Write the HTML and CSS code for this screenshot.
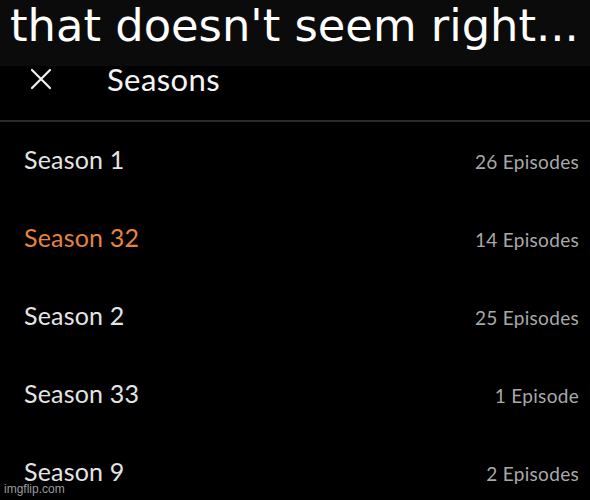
FILE: index.html
```html
<!DOCTYPE html>
<html lang="en">
<head>
    <meta charset="UTF-8">
    <title>Seasons</title>
    <link rel="stylesheet" href="styles.css">
</head>
<body>
    <div class="caption">that doesn't seem right...</div>

    <div class="panel">
        <div class="panel-head">
            <svg class="close" width="22" height="22" viewBox="0 0 22 22">
                <path d="M2 2 L20 20 M20 2 L2 20" stroke="#f2f2f2" stroke-width="2.2" stroke-linecap="round"/>
            </svg>
            <span class="title">Seasons</span>
        </div>

        <ul class="seasons">
            <li><span class="name">Season 1</span><span class="count">26 Episodes</span></li>
            <li class="active"><span class="name">Season 32</span><span class="count">14 Episodes</span></li>
            <li><span class="name">Season 2</span><span class="count">25 Episodes</span></li>
            <li><span class="name">Season 33</span><span class="count">1 Episode</span></li>
            <li><span class="name">Season 9</span><span class="count">2 Episodes</span></li>
        </ul>
    </div>

    <div class="watermark">imgflip.com</div>
</body>
</html>
```

FILE: styles.css
```css
/* Grundlayout */
body {
    margin: 0;
    width: 590px;
    height: 500px;
    overflow: hidden;
    background: #000;
    position: relative;
}
.caption {
    height: 66px;
    background: #0b0b0b;
    color: #fff;
    font-family: "DejaVu Sans", sans-serif;
    font-size: 44.8px;
    line-height: 52px;
    padding-left: 10px;
    white-space: nowrap;
}
.panel {
    font-family: Lato, "Open Sans", sans-serif;
}
.panel-head {
    display: flex;
    align-items: center;
    height: 54px;
    border-bottom: 2px solid #2a2a2a;
}
.close {
    margin-left: 30px;
    margin-top: -28px;
}
.title {
    margin-left: 55px;
    margin-top: -29px;
    color: #f4f4f4;
    font-size: 31px;
    letter-spacing: 0.4px;
}
.seasons {
    list-style: none;
    margin: -2px 0 0;
    padding: 0 11px 0 24px;
}
.seasons li {
    display: flex;
    justify-content: space-between;
    align-items: baseline;
    height: 78px;
    line-height: 78px;
}
.name {
    color: #e4e4e4;
    font-size: 25px;
    letter-spacing: 0.2px;
}
.count {
    color: #a9a9a9;
    font-size: 19px;
    letter-spacing: 0.3px;
}
.active .name {
    color: #e5843d;
}
.watermark {
    position: absolute;
    left: 4px;
    bottom: 4px;
    color: #9a9a9a;
    font-family: "Liberation Sans", Arial, sans-serif;
    font-size: 12px;
}
```
